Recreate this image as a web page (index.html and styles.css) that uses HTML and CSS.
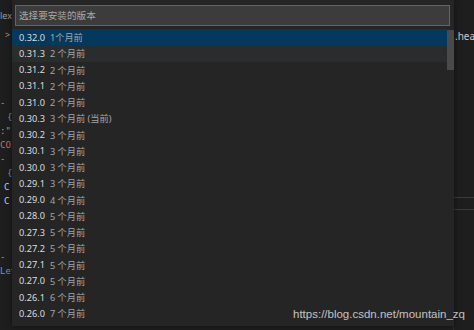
FILE: index.html
```html
<!DOCTYPE html>
<html lang="zh">
<head>
<meta charset="utf-8">
<link rel="stylesheet" href="styles.css">
</head>
<body>
<div class="editor">
  <div class="code">
    <div class="crumbs">
      <div class="crumb"><span class="t-grey">lex</span></div>
      <div class="crumb"><span class="t-grey chev">&gt;</span></div>
    </div>
    <div class="lines">
      <div class="ln"><span class="t-grey">-</span></div>
      <div class="ln"><span class="t-blue ind">{</span></div>
      <div class="ln"><span class="t-str">:"</span></div>
      <div class="ln"><span class="t-red">COI</span></div>
      <div class="ln"><span class="t-grey">-</span></div>
      <div class="ln"><span class="t-blue ind">{</span></div>
      <div class="ln"><span class="t-lb ind2">C</span></div>
      <div class="ln"><span class="t-lb ind2">C</span></div>
      <div class="ln"></div>
      <div class="ln"></div>
      <div class="ln"></div>
      <div class="ln"><span class="t-grey">-</span></div>
      <div class="ln"><span class="t-blue">Let</span></div>
    </div>
  </div>
  <div class="side">
    <div class="side-text">.hea</div>
    <div class="side-rule"></div>
    <div class="side-rule"></div>
  </div>
</div>

<div class="quick-pick">
  <div class="input-wrap">
    <div class="input">选择要安装的版本</div>
  </div>
  <div class="list-wrap">
    <div class="list">
      <div class="row selected"><span class="label">0.32.0</span><span class="desc">1个月前</span></div>
      <div class="row hover"><span class="label">0.31.3</span><span class="desc">2 个月前</span></div>
      <div class="row"><span class="label">0.31.2</span><span class="desc">2 个月前</span></div>
      <div class="row"><span class="label">0.31.1</span><span class="desc">2 个月前</span></div>
      <div class="row"><span class="label">0.31.0</span><span class="desc">2 个月前</span></div>
      <div class="row"><span class="label">0.30.3</span><span class="desc">3 个月前 (当前)</span></div>
      <div class="row"><span class="label">0.30.2</span><span class="desc">3 个月前</span></div>
      <div class="row"><span class="label">0.30.1</span><span class="desc">3 个月前</span></div>
      <div class="row"><span class="label">0.30.0</span><span class="desc">3 个月前</span></div>
      <div class="row"><span class="label">0.29.1</span><span class="desc">3 个月前</span></div>
      <div class="row"><span class="label">0.29.0</span><span class="desc">4 个月前</span></div>
      <div class="row"><span class="label">0.28.0</span><span class="desc">5 个月前</span></div>
      <div class="row"><span class="label">0.27.3</span><span class="desc">5 个月前</span></div>
      <div class="row"><span class="label">0.27.2</span><span class="desc">5 个月前</span></div>
      <div class="row"><span class="label">0.27.1</span><span class="desc">5 个月前</span></div>
      <div class="row"><span class="label">0.27.0</span><span class="desc">5 个月前</span></div>
      <div class="row"><span class="label">0.26.1</span><span class="desc">6 个月前</span></div>
      <div class="row"><span class="label">0.26.0</span><span class="desc">7 个月前</span></div>
    </div>
    <div class="scrollbar"><div class="thumb"></div></div>
  </div>
</div>

<div class="watermark">https://blog.csdn.net/mountain_zq</div>
</body>
</html>
```

FILE: styles.css
```css
html, body {
  margin: 0;
  padding: 0;
}
body {
  width: 474px;
  height: 330px;
  overflow: hidden;
  background: #1e1e1e;
  position: relative;
  font-family: "Noto Sans", "Noto Sans CJK SC", sans-serif;
}

.editor {
  display: flex;
  justify-content: space-between;
  height: 330px;
}
.code {
  width: 12px;
  font-family: "DejaVu Sans Mono", monospace;
  font-size: 9px;
}
.crumbs {
  padding-top: 6px;
  font-family: "Noto Sans", sans-serif;
}
.crumb {
  height: 19px;
  line-height: 19px;
  white-space: nowrap;
}
.lines {
  margin-top: 52px;
}
.ln {
  height: 14px;
  line-height: 14px;
  white-space: nowrap;
}
.t-grey { color: #9d9d9d; }
.t-blue { color: #569cd6; }
.t-lb { color: #9cdcfe; }
.t-str { color: #ce9178; }
.t-red { color: #d16969; }
.ind { padding-left: 7px; }
.ind2 { padding-left: 4px; }
.chev { padding-left: 5px; }

.side {
  width: 20px;
  border-left: 1px solid #2b2b2b;
  padding-top: 29px;
  display: flex;
  flex-direction: column;
}
.side-text {
  color: #c8c8c8;
  font-size: 10px;
  line-height: 14px;
  padding-left: 1px;
  margin-bottom: 154px;
}
.side-rule {
  height: 1px;
  background: #3a3a3a;
  margin-bottom: 11px;
}

.quick-pick {
  position: absolute;
  left: 12px;
  top: 0;
  width: 442px;
  height: 326px;
  background: #252526;
  box-shadow: 0 0 6px rgba(0,0,0,0.5);
  display: flex;
  flex-direction: column;
}
.input-wrap {
  padding: 5px 4px 3px 3px;
}
.input {
  height: 19px;
  border: 1px solid #3d6e96;
  background: #3c3c3c;
  color: #a9a9a9;
  font-size: 9.6px;
  line-height: 19px;
  padding-left: 3px;
}
.list-wrap {
  display: flex;
  flex: 1;
  overflow: hidden;
}
.list {
  flex: 1;
}
.row {
  height: 16.25px;
  display: flex;
  align-items: center;
  padding-left: 7px;
  font-size: 9.2px;
  white-space: nowrap;
}
.row.selected {
  background: #04395e;
}
.row.hover {
  background: #2a2d2e;
}
.label {
  color: #dcdcdc;
  margin-right: 5px;
}
.desc {
  color: #a6a6a6;
}
.scrollbar {
  width: 7px;
  padding-top: 1px;
}
.thumb {
  height: 40px;
  background: #4a4a4a;
}

.watermark {
  position: absolute;
  left: 293px;
  top: 308px;
  font-family: "Liberation Sans", Arial, sans-serif;
  font-size: 11.5px;
  color: rgba(235,235,235,0.8);
}
```
